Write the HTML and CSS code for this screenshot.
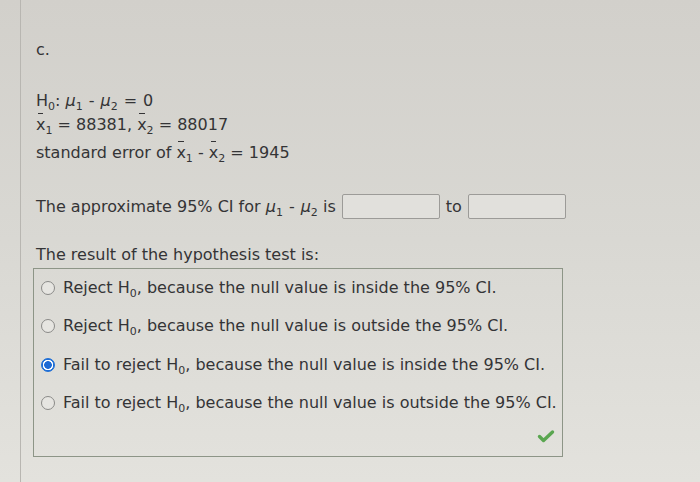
FILE: index.html
```html
<!DOCTYPE html>
<html>
<head>
<meta charset="utf-8">
<link rel="stylesheet" href="styles.css">
</head>
<body>
<div class="page">
  <div class="part">c.</div>

  <div class="given">
    <div class="line">H<sub>0</sub>: <i class="mu">μ</i><sub>1</sub><span class="op">-</span><i class="mu">μ</i><sub>2</sub><span class="op">=</span>0</div>
    <div class="line"><span class="bar">x</span><sub>1</sub> = 88381, <span class="bar">x</span><sub>2</sub> = 88017</div>
    <div class="line">standard error of <span class="bar">x</span><sub>1</sub> - <span class="bar">x</span><sub>2</sub> = 1945</div>
  </div>

  <div class="ci">
    <span>The approximate 95% CI for <i class="mu">μ</i><sub>1</sub><span class="op">-</span><i class="mu">μ</i><sub>2</sub> is</span>
    <span class="field"></span>
    <span>to</span>
    <span class="field"></span>
  </div>

  <div class="question">The result of the hypothesis test is:</div>
  <div class="choices">
    <div class="opt"><span class="radio"></span><span>Reject H<sub>0</sub>, because the null value is inside the 95% CI.</span></div>
    <div class="opt"><span class="radio"></span><span>Reject H<sub>0</sub>, because the null value is outside the 95% CI.</span></div>
    <div class="opt"><span class="radio on"></span><span>Fail to reject H<sub>0</sub>, because the null value is inside the 95% CI.</span></div>
    <div class="opt"><span class="radio"></span><span>Fail to reject H<sub>0</sub>, because the null value is outside the 95% CI.</span></div>
    <div class="check">
      <svg width="18" height="14" viewBox="0 0 18 14"><path d="M2.5 7.5 L6.5 11.5 L15.5 3" fill="none" stroke="#5aa650" stroke-width="3.4" stroke-linecap="round" stroke-linejoin="round"/></svg>
    </div>
  </div>
</div>
</body>
</html>
```
FILE: styles.css
```css
html, body {
  margin: 0;
  height: 100%;
}
body {
  background: linear-gradient(180deg, #d2d0cb 0%, #d9d8d3 50%, #e3e2dd 100%);
  font-family: "DejaVu Sans", Verdana, sans-serif;
  font-size: 16px;
  color: #343436;
  overflow: hidden;
}
.page {
  margin-left: 20px;
  border-left: 1px solid #b8b6b1;
  min-height: 100%;
  padding: 40px 0 0 15px;
  box-sizing: border-box;
}
.part {
  line-height: 20px;
  height: 20px;
  margin-bottom: 31px;
}
.line {
  line-height: 20px;
  height: 26px;
}
sub {
  font-size: 11px;
  vertical-align: -4px;
  line-height: 0;
}
.mu {
  font-style: italic;
}
.op {
  margin: 0 6px;
}
.bar {
  position: relative;
}
.bar::before {
  content: "";
  position: absolute;
  left: 2px;
  right: 2px;
  top: -2px;
  border-top: 1px solid #343436;
}
.given .line:first-child { height: 24px; }
.given .line:nth-child(2) { height: 28px; }
.ci {
  margin-top: 24px;
  display: flex;
  align-items: center;
  height: 26px;
}
.ci .field {
  width: 96px;
  height: 23px;
  border: 1px solid #9c9b98;
  border-radius: 2px;
  background: #e1e0dc;
  margin: 0 6px;
}
.ci .field:first-of-type { margin-left: 7px; }
.question {
  margin-top: 26px;
  line-height: 20px;
}
.choices {
  margin-left: -3px;
  width: 530px;
  border: 1px solid #8d9587;
  margin-top: 3px;
  padding: 0 0 0 7px;
  height: 189px;
  box-sizing: border-box;
  position: relative;
}
.opt {
  display: flex;
  align-items: center;
  gap: 8px;
  height: 38.3px;
  line-height: 20px;
}
.radio {
  width: 12px;
  height: 12px;
  border-radius: 50%;
  border: 1px solid #8a8a88;
  background: #e6e5e1;
  flex: none;
}
.radio.on {
  border: 1px solid #1f6fd6;
  background: radial-gradient(circle, #1e6ad4 0 3.5px, #fff 4.2px 5px, #1f6fd6 5.5px);
}
.check {
  position: absolute;
  right: 7px;
  bottom: 9px;
}
```
